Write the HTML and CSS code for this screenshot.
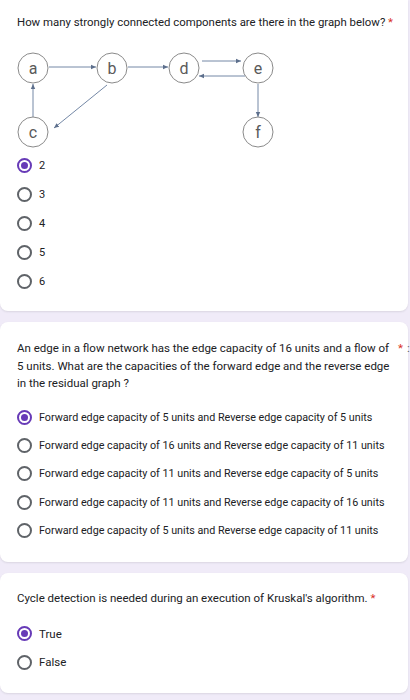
FILE: index.html
```html
<!DOCTYPE html>
<html lang="en">
<head>
    <meta charset="UTF-8">
    <meta name="viewport" content="width=device-width, initial-scale=1.0">
    <title>Quiz</title>
    <link rel="stylesheet" href="styles.css">
</head>
<body>

    <div class="card first">
        <p class="title q1">How many strongly connected components are there in the graph below? <span class="req">*</span></p>

        <!-- graph picture -->
        <svg class="graph" width="290" height="100" viewBox="0 0 290 100">
            <defs>
                <marker id="arr" markerWidth="6" markerHeight="6" refX="5" refY="3" orient="auto" markerUnits="userSpaceOnUse">
                    <path d="M0,0.8 L5,3 L0,5.2 Z" fill="#5d6f8c"/>
                </marker>
            </defs>
            <g stroke="#7488a6" stroke-width="1" fill="none" marker-end="url(#arr)">
                <line x1="32" y1="16" x2="79" y2="16"/>
                <line x1="111" y1="16" x2="151" y2="16"/>
                <line x1="185" y1="10" x2="224" y2="10"/>
                <line x1="228" y1="25" x2="182" y2="25"/>
                <line x1="241" y1="33" x2="241" y2="66"/>
                <line x1="16" y1="66" x2="16" y2="33"/>
                <line x1="90" y1="34" x2="37" y2="77"/>
            </g>
            <g stroke="#8a8a8a" stroke-width="1" fill="#fff">
                <circle cx="16" cy="17" r="15"/>
                <circle cx="95" cy="17" r="15"/>
                <circle cx="167" cy="17" r="15"/>
                <circle cx="241" cy="17" r="15"/>
                <circle cx="16" cy="81" r="15"/>
                <circle cx="241" cy="81" r="15"/>
            </g>
            <g class="node-label" text-anchor="middle">
                <text x="16" y="23">a</text>
                <text x="95" y="23">b</text>
                <text x="167" y="23">d</text>
                <text x="241" y="23">e</text>
                <text x="16" y="87">c</text>
                <text x="241" y="87">f</text>
            </g>
        </svg>

        <div class="options">
            <div class="opt"><span class="radio on"></span>2</div>
            <div class="opt"><span class="radio"></span>3</div>
            <div class="opt"><span class="radio"></span>4</div>
            <div class="opt"><span class="radio"></span>5</div>
            <div class="opt"><span class="radio"></span>6</div>
        </div>
    </div>

    <div class="card second">
        <div class="title-row">
            <p class="title q2">An edge in a flow network has the edge capacity of 16 units and a flow of 5 units. What are the capacities of the forward edge and the reverse edge in the residual graph ?</p>
            <span class="req side">*</span><span class="colon">:</span>
        </div>
        <div class="options long">
            <div class="opt"><span class="radio on"></span>Forward edge capacity of 5 units and Reverse edge capacity of 5 units</div>
            <div class="opt"><span class="radio"></span>Forward edge capacity of 16 units and Reverse edge capacity of 11 units</div>
            <div class="opt"><span class="radio"></span>Forward edge capacity of 11 units and Reverse edge capacity of 5 units</div>
            <div class="opt"><span class="radio"></span>Forward edge capacity of 11 units and Reverse edge capacity of 16 units</div>
            <div class="opt"><span class="radio"></span>Forward edge capacity of 5 units and Reverse edge capacity of 11 units</div>
        </div>
    </div>

    <div class="card third">
        <p class="title q3">Cycle detection is needed during an execution of Kruskal's algorithm. <span class="req">*</span></p>
        <div class="options tf">
            <div class="opt"><span class="radio on"></span>True</div>
            <div class="opt"><span class="radio"></span>False</div>
        </div>
    </div>

</body>
</html>
```

FILE: styles.css
```css
body { margin: 0; background-color: #f0ebf8; font-family: Roboto, "Liberation Sans", sans-serif; color: #202124; height: 700px; overflow: hidden; }
.card { background-color: #fff; border-radius: 8px; margin: 0 2px 11px 0; padding: 0 17px; box-shadow: 0 1px 2px rgba(60, 64, 67, 0.12); }
.card.first { border-top-left-radius: 0; border-top-right-radius: 0; padding-top: 13px; padding-bottom: 15px; }
.card.second { padding-top: 18px; padding-bottom: 18px; }
.card.third { padding-top: 16px; padding-bottom: 17px; }
.title { margin: 0; }
.q1 { font-size: 11.4px; line-height: 18px; white-space: nowrap; }
.q2 { font-size: 11.5px; line-height: 17.5px; width: 378px; flex-shrink: 0; }
.q3 { font-size: 11.5px; line-height: 18px; }
.req { color: #d93025; }
.title-row { display: flex; }
.title-row .side { margin-left: 3px; font-size: 11.5px; line-height: 17.5px; }
.title-row .colon { margin-left: 4px; font-size: 11.5px; line-height: 17.5px; color: #5f6368; }
.graph { display: block; margin-top: 20px; }
.node-label { font-family: Roboto, "Liberation Sans", sans-serif; font-size: 16px; fill: #5a5a5a; }
.opt { display: flex; align-items: center; height: 29px; font-size: 11px; color: #202124; white-space: nowrap; }
.long { margin-top: 10.5px; }
.long .opt { height: 28.3px; font-size: 10.75px; }
.tf { margin-top: 12px; }
.tf .opt { height: 28.5px; font-size: 11.5px; }
.radio { width: 11px; height: 11px; border: 2px solid #5f6368; border-radius: 50%; margin-right: 7px; display: flex; align-items: center; justify-content: center; flex-shrink: 0; }
.radio.on { border-color: #673ab7; }
.radio.on::after { content: ""; width: 7px; height: 7px; border-radius: 50%; background-color: #673ab7; }
```
